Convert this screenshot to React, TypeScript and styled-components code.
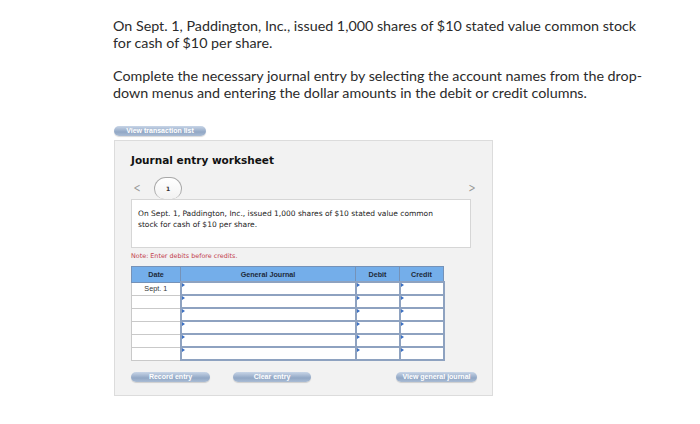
import styled, { createGlobalStyle } from 'styled-components';

const GlobalStyle = createGlobalStyle`
  html, body { margin: 0; padding: 0; background: #fff; }
  body { width: 700px; height: 424px; overflow: hidden; }
`;

const Page = styled.div`
  padding: 17px 0 0 113px;
  width: 560px;
  font-family: Lato, "Open Sans", sans-serif;
  color: #2b2b2b;
`;

const Prompt = styled.p<{ $w: number }>`
  margin: 0 0 16px;
  width: ${p => p.$w}px;
  font-size: 14.3px;
  line-height: 17px;
`;

const PillButton = styled.button<{ $w: number }>`
  width: ${p => p.$w}px;
  height: 10px;
  padding: 0;
  border: none;
  border-radius: 5px;
  background: linear-gradient(#c8d5e7, #91a7c5 60%, #aabcd4);
  color: #fff;
  font-family: "Liberation Sans", Arial, sans-serif;
  font-weight: bold;
  font-size: 7px;
  line-height: 10px;
  white-space: nowrap;
  box-shadow: 0 1px 1px rgba(0, 0, 0, 0.15);
  cursor: pointer;
`;

const TopBar = styled.div`
  margin-top: 14px;
  padding-left: 1px;
  height: 23px;
`;

const Panel = styled.div`
  width: 379px;
  height: 256px;
  box-sizing: border-box;
  background: #f2f2f2;
  border: 1px solid #dcdcdc;
  padding: 12px 15px 0 16px;
  margin-left: 1px;
  font-family: "DejaVu Sans", Verdana, sans-serif;
`;

const Title = styled.h2`
  margin: 0;
  font-size: 10.5px;
  font-weight: bold;
  color: #111;
  line-height: 14px;
`;

const NavRow = styled.div`
  display: flex;
  align-items: center;
  height: 22px;
  margin-top: 10px;
  padding: 0 0 0 1px;
`;

const Chevron = styled.span`
  font-size: 12px;
  color: #999;
  font-family: "DejaVu Sans", sans-serif;
  transform: scaleX(0.7);
`;

const StepBubble = styled.div`
  width: 28px;
  height: 22px;
  margin-left: 12px;
  box-sizing: border-box;
  border: 1px solid #a8a8a8;
  border-bottom: none;
  border-radius: 14px 14px 12px 12px;
  background: linear-gradient(#fff, #f2f2f2);
  font-size: 6px;
  font-weight: bold;
  display: flex;
  align-items: center;
  justify-content: center;
  color: #333;
`;

const Spacer = styled.div`
  flex: 1;
`;

const Description = styled.div`
  width: 340px;
  height: 49px;
  box-sizing: border-box;
  background: #fff;
  border: 1px solid #d6d6d6;
  padding: 8px 20px 8px 6px;
  font-size: 7.5px;
  line-height: 11px;
  color: #222;
`;

const Note = styled.div`
  margin-top: 3px;
  font-size: 6.4px;
  color: #c23b4b;
  line-height: 10px;
`;

const Table = styled.table`
  margin-top: 5px;
  border-collapse: collapse;
  font-family: "Liberation Sans", Arial, sans-serif;
  font-size: 7.2px;
  width: 308px;
  table-layout: fixed;
`;

const Th = styled.th<{ $w: number }>`
  width: ${p => p.$w}px;
  height: 14px;
  padding: 0;
  background: #74aeea;
  border: 1px solid #7592b8;
  color: #1d2a3a;
  font-weight: bold;
`;

const DateCell = styled.td`
  height: 11px;
  padding: 0;
  background: #fff;
  border: 1px solid #c9c9c9;
  text-align: center;
  color: #333;
`;

const EntryCell = styled.td`
  position: relative;
  height: 11px;
  padding: 0;
  background: #fff;
  border: 2px solid #8ea2c0;
  &::before {
    content: '';
    position: absolute;
    left: 0;
    top: 0;
    border-left: 3px solid #3a6fc2;
    border-top: 2px solid transparent;
    border-bottom: 2px solid transparent;
  }
`;

const Actions = styled.div`
  display: flex;
  margin-top: 11px;
  gap: 23px;
`;

const rows = ['Sept. 1', '', '', '', '', ''];

export default function App() {
  return (
    <>
      <GlobalStyle />
      <Page>
        <Prompt $w={540}>
          On Sept. 1, Paddington, Inc., issued 1,000 shares of $10 stated value common stock for cash of $10 per share.
        </Prompt>
        <Prompt $w={540}>
          Complete the necessary journal entry by selecting the account names from the drop-down menus and entering the dollar amounts in the debit or credit columns.
        </Prompt>
        <TopBar>
          <PillButton $w={92}>View transaction list</PillButton>
        </TopBar>
        <Panel>
          <Title>Journal entry worksheet</Title>
          <NavRow>
            <Chevron>&lt;</Chevron>
            <StepBubble>1</StepBubble>
            <Spacer />
            <Chevron>&gt;</Chevron>
          </NavRow>
          <Description>
            On Sept. 1, Paddington, Inc., issued 1,000 shares of $10 stated value common stock for cash of $10 per share.
          </Description>
          <Note>Note: Enter debits before credits.</Note>
          <Table>
            <thead>
              <tr>
                <Th $w={48}>Date</Th>
                <Th $w={174}>General Journal</Th>
                <Th $w={43}>Debit</Th>
                <Th $w={43}>Credit</Th>
              </tr>
            </thead>
            <tbody>
              {rows.map((d, i) => (
                <tr key={i}>
                  <DateCell>{d}</DateCell>
                  <EntryCell />
                  <EntryCell />
                  <EntryCell />
                </tr>
              ))}
            </tbody>
          </Table>
          <Actions>
            <PillButton $w={79}>Record entry</PillButton>
            <PillButton $w={78}>Clear entry</PillButton>
            <Spacer />
            <PillButton $w={81}>View general journal</PillButton>
          </Actions>
        </Panel>
      </Page>
    </>
  );
}
